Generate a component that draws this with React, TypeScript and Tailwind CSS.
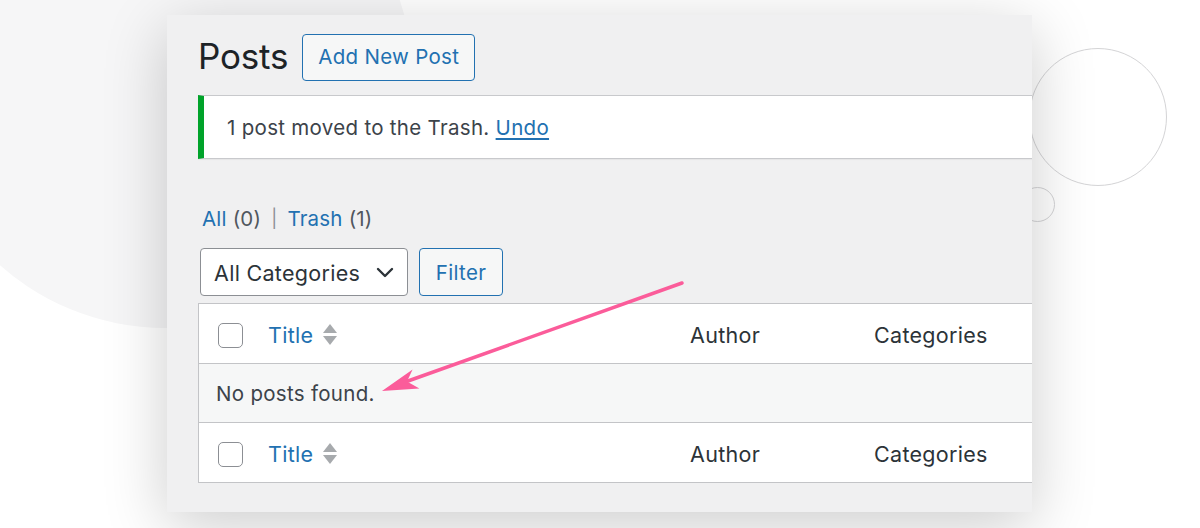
import React from "react";

const font = { fontFamily: "Inter, 'Noto Sans', 'Liberation Sans', sans-serif" };

function SortIcon() {
  return (
    <svg width="14" height="22" viewBox="0 0 14 22" className="ml-[10px]">
      <path d="M7 0 L14 9 L0 9 Z" fill="#a7aaad" />
      <path d="M0 12 L14 12 L7 21 Z" fill="#a7aaad" />
    </svg>
  );
}

function Checkbox() {
  return <div className="w-[25px] h-[25px] rounded-[5px] border-[1.5px] border-[#8c8f94] bg-white shrink-0" />;
}

function HeaderRow({ bottom }: { bottom?: boolean }) {
  return (
    <div className={`flex items-center h-[60px] bg-white pl-[19px] pt-[3px] ${bottom ? "border-t border-[#c3c4c7]" : "border-b border-[#c3c4c7]"}`}>
      <Checkbox />
      <div className="ml-[25px] w-[422px] flex items-center">
        <span className="text-[21.5px] tracking-[0.3px] text-[#2271b1]">Title</span>
        <SortIcon />
      </div>
      <div className="w-[184px] text-[21.5px] tracking-[0.3px] text-[#2c3338]">Author</div>
      <div className="text-[21.5px] tracking-[0.3px] text-[#2c3338]">Categories</div>
    </div>
  );
}

export default function App() {
  return (
    <div className="relative w-[1200px] h-[528px] overflow-hidden bg-white" style={font}>
      {/* background decorations */}
      <div className="absolute left-[-83px] top-[-168px] w-[496px] h-[496px] rounded-full bg-[#f6f6f7]" />
      <div className="absolute left-[1029px] top-[48px] w-[138px] h-[138px] rounded-full border border-[#d4d4d6]" />
      <div className="absolute left-[1020px] top-[187px] w-[35px] h-[35px] rounded-full border border-[#d4d4d6]" />

      <div className="relative pt-[15px] pl-[167px]">
        <div className="relative z-10 w-[865px] h-[497px] bg-[#f0f0f1] overflow-hidden shadow-[0_14px_60px_rgba(0,0,0,0.2)] pl-[31px] pt-[19px]">
          <div className="flex items-center h-[47px]">
            <h1 className="text-[35px] leading-none text-[#1d2327] font-normal tracking-[-0.2px] mt-[-3px]">Posts</h1>
            <button className="ml-[14px] h-[47px] w-[173px] border border-[#2271b1] rounded-[4px] bg-[#f6f7f7] text-[#2271b1] text-[20.5px] tracking-[0.3px]">
              Add New Post
            </button>
          </div>

          <div className="mt-[14px] w-[900px] h-[64px] flex items-center bg-white border-y border-[#c8c9cc] border-l-[6px] border-l-[#00a32a] pl-[23px] pt-[2px] text-[20.5px] tracking-[0.3px] text-[#3c434a] shadow-[0_1px_1px_rgba(0,0,0,0.04)]">
            <span>1 post moved to the Trash.&nbsp;</span>
            <span className="text-[#2271b1] underline underline-offset-[3px]">Undo</span>
          </div>

          <div className="mt-[46px] ml-[4px] h-[28px] leading-[28px] text-[20.5px] tracking-[0.2px] flex items-center">
            <span className="text-[#2271b1]">All</span>
            <span className="text-[#50575e] ml-[6px]">(0)</span>
            <span className="text-[#8c8f94] text-[18px] mx-[10px]">|</span>
            <span className="text-[#2271b1]">Trash</span>
            <span className="text-[#50575e] ml-[6px]">(1)</span>
          </div>

          <div className="mt-[15px] ml-[2px] flex items-center gap-[11px]">
            <div className="w-[208px] h-[48px] bg-white border border-[#8c8f94] rounded-[4px] flex items-center justify-between pl-[13px] pr-[13px] pt-[2px] text-[21.5px] tracking-[0.3px] text-[#2c3338]">
              <span>All Categories</span>
              <svg width="18" height="12" viewBox="0 0 18 12">
                <path d="M2 2 L9 9 L16 2" fill="none" stroke="#2c3338" strokeWidth="2.4" strokeLinecap="round" strokeLinejoin="round" />
              </svg>
            </div>
            <button className="w-[84px] h-[48px] pt-[2px] border border-[#2271b1] rounded-[4px] bg-[#f6f7f7] text-[#2271b1] text-[20.5px] tracking-[0.3px]">
              Filter
            </button>
          </div>

          <div className="mt-[7px] w-[900px] border border-[#c3c4c7] bg-white">
            <HeaderRow />
            <div className="h-[58px] bg-[#f6f7f7] flex items-center pl-[17px] pt-[3px] text-[20.5px] tracking-[0.3px] text-[#3c434a]">
              No posts found.
            </div>
            <HeaderRow bottom />
          </div>
        </div>
      </div>

      {/* annotation arrow */}
      <svg className="absolute left-0 top-0 z-20 pointer-events-none" width="1200" height="528" viewBox="0 0 1200 528">
        <line x1="682" y1="283" x2="408" y2="381" stroke="#fb5c9a" strokeWidth="3.5" strokeLinecap="round" />
        <path d="M382 391 L412.6 369.6 L407 381.5 L419.4 388.4 Z" fill="#fb5c9a" />
      </svg>
    </div>
  );
}
